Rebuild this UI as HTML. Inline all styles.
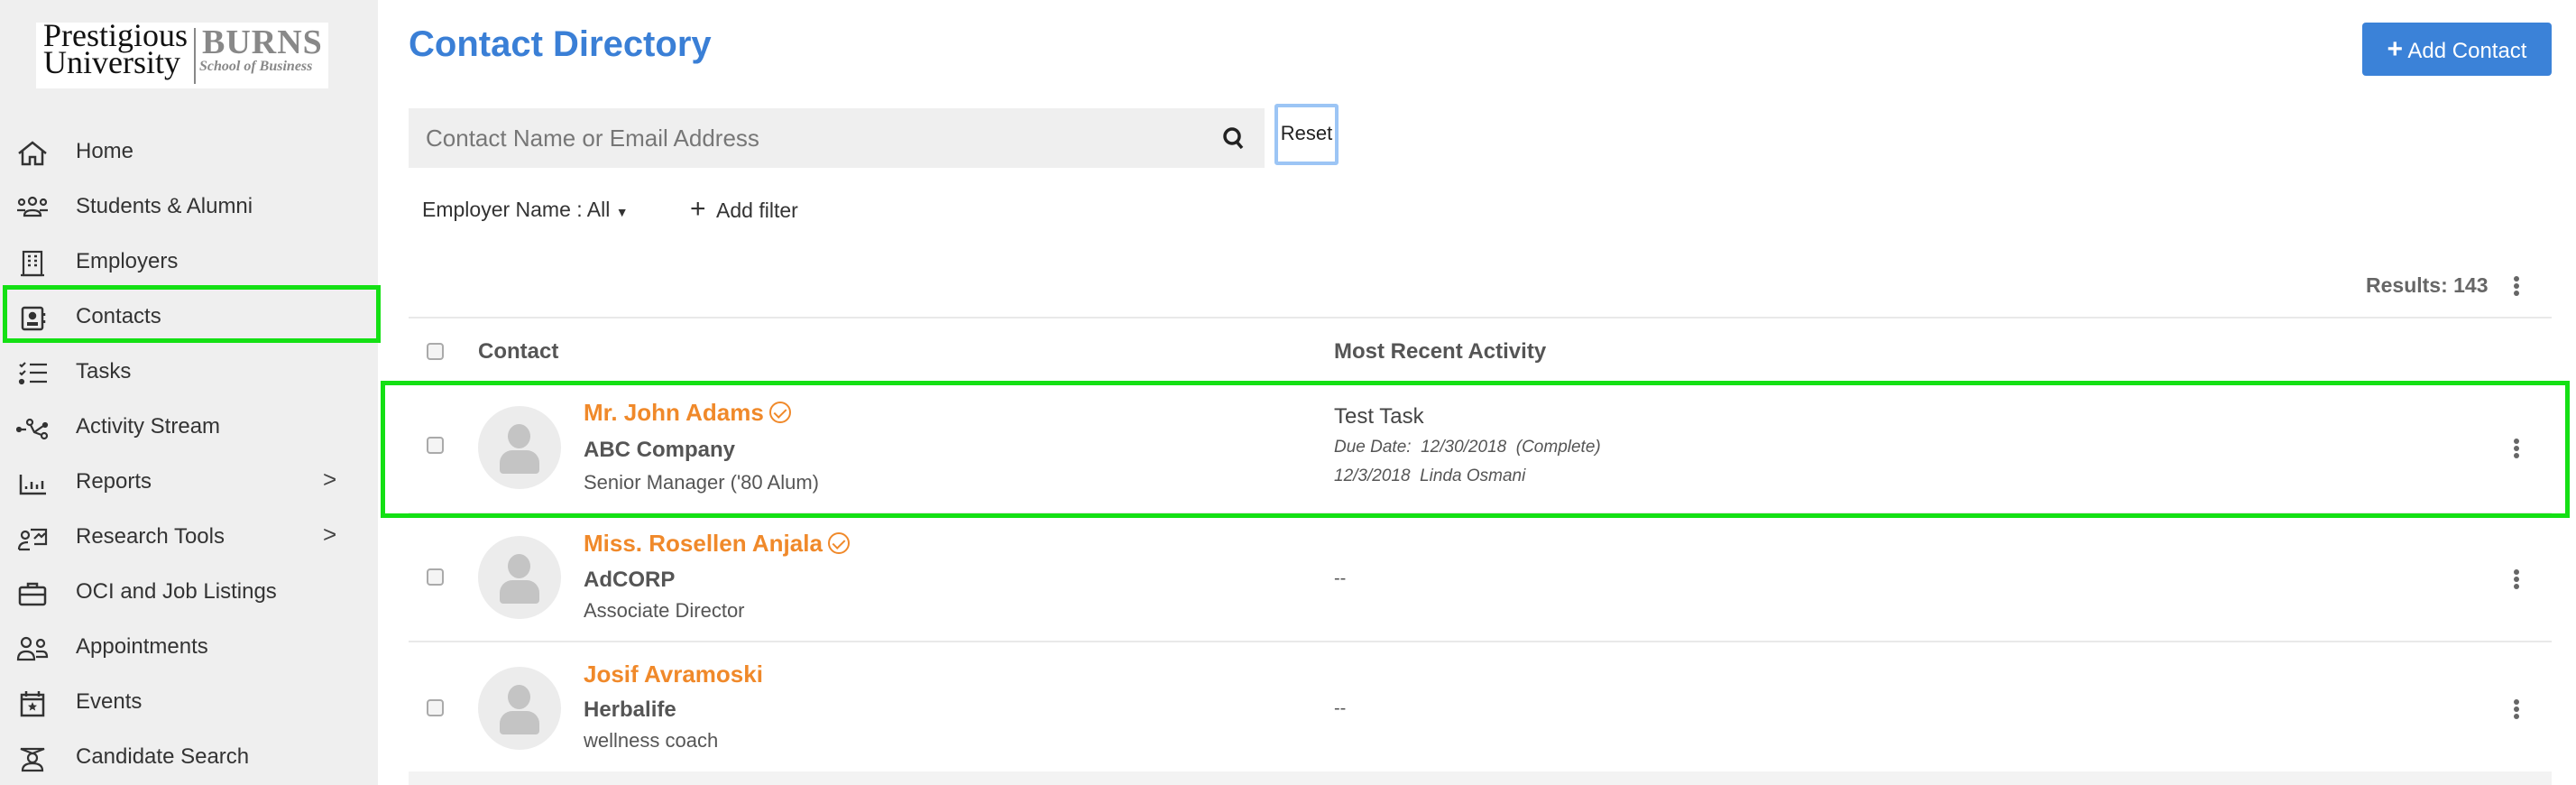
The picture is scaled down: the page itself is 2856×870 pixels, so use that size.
<!DOCTYPE html>
<html><head><meta charset="utf-8"><style>
*{margin:0;padding:0;box-sizing:border-box}
body{width:2856px;height:870px;overflow:hidden;background:#fff;font-family:"Liberation Sans",sans-serif;position:relative;color:#333}
.a{position:absolute;white-space:nowrap}
#side{position:absolute;left:0;top:0;width:419px;height:870px;background:#efefef}
.nav{position:absolute;left:84px;font-size:24px;color:#333;margin-top:4px}
.ic{position:absolute;left:18px;width:36px;height:32px;margin-top:4px}
.chev{position:absolute;left:358px;font-size:26px;color:#444;margin-top:4px}
.line{position:absolute;left:453px;width:2376px;height:2px;background:#e9e9e9}
.cb{position:absolute;left:473px;width:19px;height:19px;border:2px solid #aaa;border-radius:4px;background:#f4f4f4}
.av{position:absolute;left:530px;width:92px;height:92px;border-radius:50%;background:#ececec;overflow:hidden}
.av:before{content:"";position:absolute;left:33px;top:20px;width:25px;height:27px;border-radius:50%;background:#c4c4c4}
.av:after{content:"";position:absolute;left:24px;top:49px;width:44px;height:26px;border-radius:14px 14px 4px 4px;background:#c4c4c4}
.nm{position:absolute;left:647px;font-size:26px;font-weight:bold;color:#f0892a}
.co{position:absolute;left:647px;font-size:24px;font-weight:bold;color:#555}
.sub{position:absolute;left:647px;font-size:22px;color:#555}
.keb{position:absolute;left:2787px;width:6px}
.keb i{display:block;width:6px;height:6px;border-radius:50%;background:#666;margin-bottom:2px}
.chk{display:inline-block;width:24px;height:24px;border:2px solid #f0892a;border-radius:50%;vertical-align:-3px;margin-left:6px;position:relative}
.chk:after{content:"";position:absolute;left:6px;top:3px;width:6px;height:11px;border:solid #f0892a;border-width:0 2px 2px 0;transform:rotate(45deg)}
</style></head><body>
<div id="side">
 <div class="a" style="left:40px;top:25px;width:324px;height:73px;background:#fff"></div>
 <div class="a" style="left:48px;top:24px;font-family:'Liberation Serif',serif;font-size:36px;line-height:30px;color:#111">Prestigious<br>University</div>
 <div class="a" style="left:215px;top:31px;width:2px;height:62px;background:#888"></div>
 <div class="a" style="left:224px;top:25px;font-family:'Liberation Serif',serif;font-size:38px;font-weight:bold;color:#888;letter-spacing:1px">BURNS</div>
 <div class="a" style="left:221px;top:65px;font-family:'Liberation Serif',serif;font-size:16px;font-style:italic;font-weight:bold;color:#888">School of Business</div>

 <svg class="ic" style="top:150px" viewBox="0 0 36 32" fill="none" stroke="#333" stroke-width="2.5"><path d="M3 16 L18 4 L33 16 M7 13 V28 H15 V20 H21 V28 H29 V13"/></svg>
 <div class="nav" style="top:150px">Home</div>
 <svg class="ic" style="top:211px" viewBox="0 0 36 32" fill="none" stroke="#333" stroke-width="2.2"><circle cx="6" cy="9" r="3"/><circle cx="18" cy="8" r="4"/><circle cx="30" cy="9" r="3"/><path d="M1 18 h9 M26 18 h9 M9 24 q0-6 9-6 q9 0 9 6 z"/></svg>
 <div class="nav" style="top:211px">Students &amp; Alumni</div>
 <svg class="ic" style="top:272px" viewBox="0 0 36 32" fill="none" stroke="#333" stroke-width="2.2"><rect x="8" y="3" width="20" height="26"/><path d="M5 29 H31"/><path d="M13 8h3M20 8h3M13 13h3M20 13h3M13 18h3M20 18h3" stroke-width="2.5"/></svg>
 <div class="nav" style="top:272px">Employers</div>
 <svg class="ic" style="top:333px" viewBox="0 0 36 32" fill="none" stroke="#333" stroke-width="2.5"><rect x="7" y="4" width="22" height="24" rx="2"/><circle cx="18" cy="13" r="3" fill="#333"/><path d="M12 22 h12" stroke-width="4"/><path d="M31 10v3M31 18v3"/></svg>
 <div class="nav" style="top:333px">Contacts</div>
 <svg class="ic" style="top:394px" viewBox="0 0 36 32" fill="none" stroke="#333" stroke-width="2.2"><path d="M4 6l2 2 4-4M4 15l2 2 4-4"/><circle cx="6" cy="25" r="2" fill="#333"/><path d="M15 6H34M15 15H34M15 25H34"/></svg>
 <div class="nav" style="top:394px">Tasks</div>
 <svg class="ic" style="top:455px" viewBox="0 0 36 32" fill="none" stroke="#333" stroke-width="2.2"><circle cx="3" cy="17" r="2" fill="#333"/><circle cx="15" cy="9" r="3"/><circle cx="32" cy="12" r="2" fill="#333"/><circle cx="31" cy="24" r="3"/><path d="M6 17h5M16 12l4 8 8 3M20 20l10-7"/></svg>
 <div class="nav" style="top:455px">Activity Stream</div>
 <svg class="ic" style="top:516px" viewBox="0 0 36 32" fill="none" stroke="#333" stroke-width="2.5"><path d="M5 6V27H33M11 22v-3M17 22v-8M23 22v-5M29 22v-9"/></svg>
 <div class="nav" style="top:516px">Reports</div><div class="chev" style="top:512px">&gt;</div>
 <svg class="ic" style="top:577px" viewBox="0 0 36 32" fill="none" stroke="#333" stroke-width="2.2"><circle cx="10" cy="12" r="4"/><path d="M3 28q0-8 10-8M3 28h12M16 6h17v16H20M20 16l5-5 3 3 4-4"/></svg>
 <div class="nav" style="top:577px">Research Tools</div><div class="chev" style="top:573px">&gt;</div>
 <svg class="ic" style="top:638px" viewBox="0 0 36 32" fill="none" stroke="#333" stroke-width="2.5"><rect x="4" y="9" width="28" height="19" rx="2"/><path d="M13 9V5h10v4M4 17h28"/></svg>
 <div class="nav" style="top:638px">OCI and Job Listings</div>
 <svg class="ic" style="top:699px" viewBox="0 0 36 32" fill="none" stroke="#333" stroke-width="2.2"><circle cx="11" cy="9" r="5"/><circle cx="27" cy="10" r="4"/><path d="M2 28q0-9 9-9 9 0 9 9zM22 19h7q5 0 5 6h-12"/></svg>
 <div class="nav" style="top:699px">Appointments</div>
 <svg class="ic" style="top:760px" viewBox="0 0 36 32" fill="none" stroke="#333" stroke-width="2.5"><rect x="6" y="6" width="24" height="23"/><path d="M11 2v6M25 2v6M6 11h24"/><path d="M18 14l1.5 3.5 3.5.3-2.7 2.3.9 3.5-3.2-2-3.2 2 .9-3.5-2.7-2.3 3.5-.3z" fill="#333" stroke="none"/></svg>
 <div class="nav" style="top:760px">Events</div>
 <svg class="ic" style="top:821px" viewBox="0 0 36 32" fill="none" stroke="#333" stroke-width="2.2"><path d="M5 5h26l-13 5z"/><circle cx="18" cy="15" r="5"/><path d="M7 29q0-8 11-8 11 0 11 8z"/></svg>
 <div class="nav" style="top:821px">Candidate Search</div>
</div>
<div class="a" style="left:3px;top:316px;width:419px;height:64px;border:5px solid #14e014"></div>

<div class="a" style="left:453px;top:27px;font-size:40px;font-weight:bold;color:#3a7fd6">Contact Directory</div>
<div class="a" style="left:2619px;top:25px;width:210px;height:59px;background:#3b82d8;border-radius:4px;color:#fff;font-size:24px;line-height:59px;text-align:center"><b style="font-size:30px">+</b> Add Contact</div>

<div class="a" style="left:453px;top:120px;width:949px;height:66px;background:#efefef"></div>
<div class="a" style="left:472px;top:138px;font-size:26px;color:#777">Contact Name or Email Address</div>
<svg class="a" style="left:1355px;top:140px" width="26" height="28" viewBox="0 0 26 28" fill="none" stroke="#222" stroke-width="3.5"><circle cx="11" cy="11" r="8"/><path d="M16 17l6 7"/></svg>
<div class="a" style="left:1413px;top:115px;width:71px;height:68px;border:4px solid #9cc5f5;border-radius:3px;font-size:22px;color:#222;line-height:58px;text-align:center">Reset</div>

<div class="a" style="left:468px;top:219px;font-size:23px;color:#333">Employer Name : All <span style="font-size:14px">▼</span></div>
<div class="a" style="left:765px;top:215px;font-size:23px;color:#333"><span style="font-size:30px;font-weight:300">+</span>&nbsp; Add filter</div>

<div class="a" style="left:2623px;top:303px;font-size:23px;font-weight:bold;color:#666">Results: 143</div>
<div class="keb" style="top:306px"><i></i><i></i><i></i></div>
<div class="line" style="top:351px"></div>

<div class="cb" style="top:380px"></div>
<div class="a" style="left:530px;top:376px;font-size:24px;font-weight:bold;color:#555">Contact</div>
<div class="a" style="left:1479px;top:376px;font-size:24px;font-weight:bold;color:#555">Most Recent Activity</div>

<div class="line" style="top:568px"></div>
<div class="line" style="top:710px"></div>
<div class="a" style="left:453px;top:855px;width:2376px;height:15px;background:#f3f3f3"></div>

<div class="cb" style="top:484px"></div>
<div class="av" style="top:450px"></div>
<div class="nm" style="top:442px">Mr. John Adams<span class="chk"></span></div>
<div class="co" style="top:485px">ABC Company</div>
<div class="sub" style="top:522px">Senior Manager ('80 Alum)</div>
<div class="a" style="left:1479px;top:448px;font-size:24px;color:#444">Test Task</div>
<div class="a" style="left:1479px;top:485px;font-size:19px;font-style:italic;color:#555">Due Date:&nbsp; 12/30/2018&nbsp; (Complete)</div>
<div class="a" style="left:1479px;top:517px;font-size:19px;font-style:italic;color:#555">12/3/2018&nbsp; Linda Osmani</div>
<div class="keb" style="top:486px"><i></i><i></i><i></i></div>

<div class="cb" style="top:630px"></div>
<div class="av" style="top:594px"></div>
<div class="nm" style="top:587px">Miss. Rosellen Anjala<span class="chk"></span></div>
<div class="co" style="top:629px">AdCORP</div>
<div class="sub" style="top:664px">Associate Director</div>
<div class="a" style="left:1479px;top:630px;font-size:20px;color:#555">--</div>
<div class="keb" style="top:631px"><i></i><i></i><i></i></div>

<div class="cb" style="top:775px"></div>
<div class="av" style="top:739px"></div>
<div class="nm" style="top:732px">Josif Avramoski</div>
<div class="co" style="top:773px">Herbalife</div>
<div class="sub" style="top:808px">wellness coach</div>
<div class="a" style="left:1479px;top:774px;font-size:20px;color:#555">--</div>
<div class="keb" style="top:775px"><i></i><i></i><i></i></div>

<div class="a" style="left:422px;top:422px;width:2427px;height:152px;border:5px solid #14e014"></div>
</body></html>
